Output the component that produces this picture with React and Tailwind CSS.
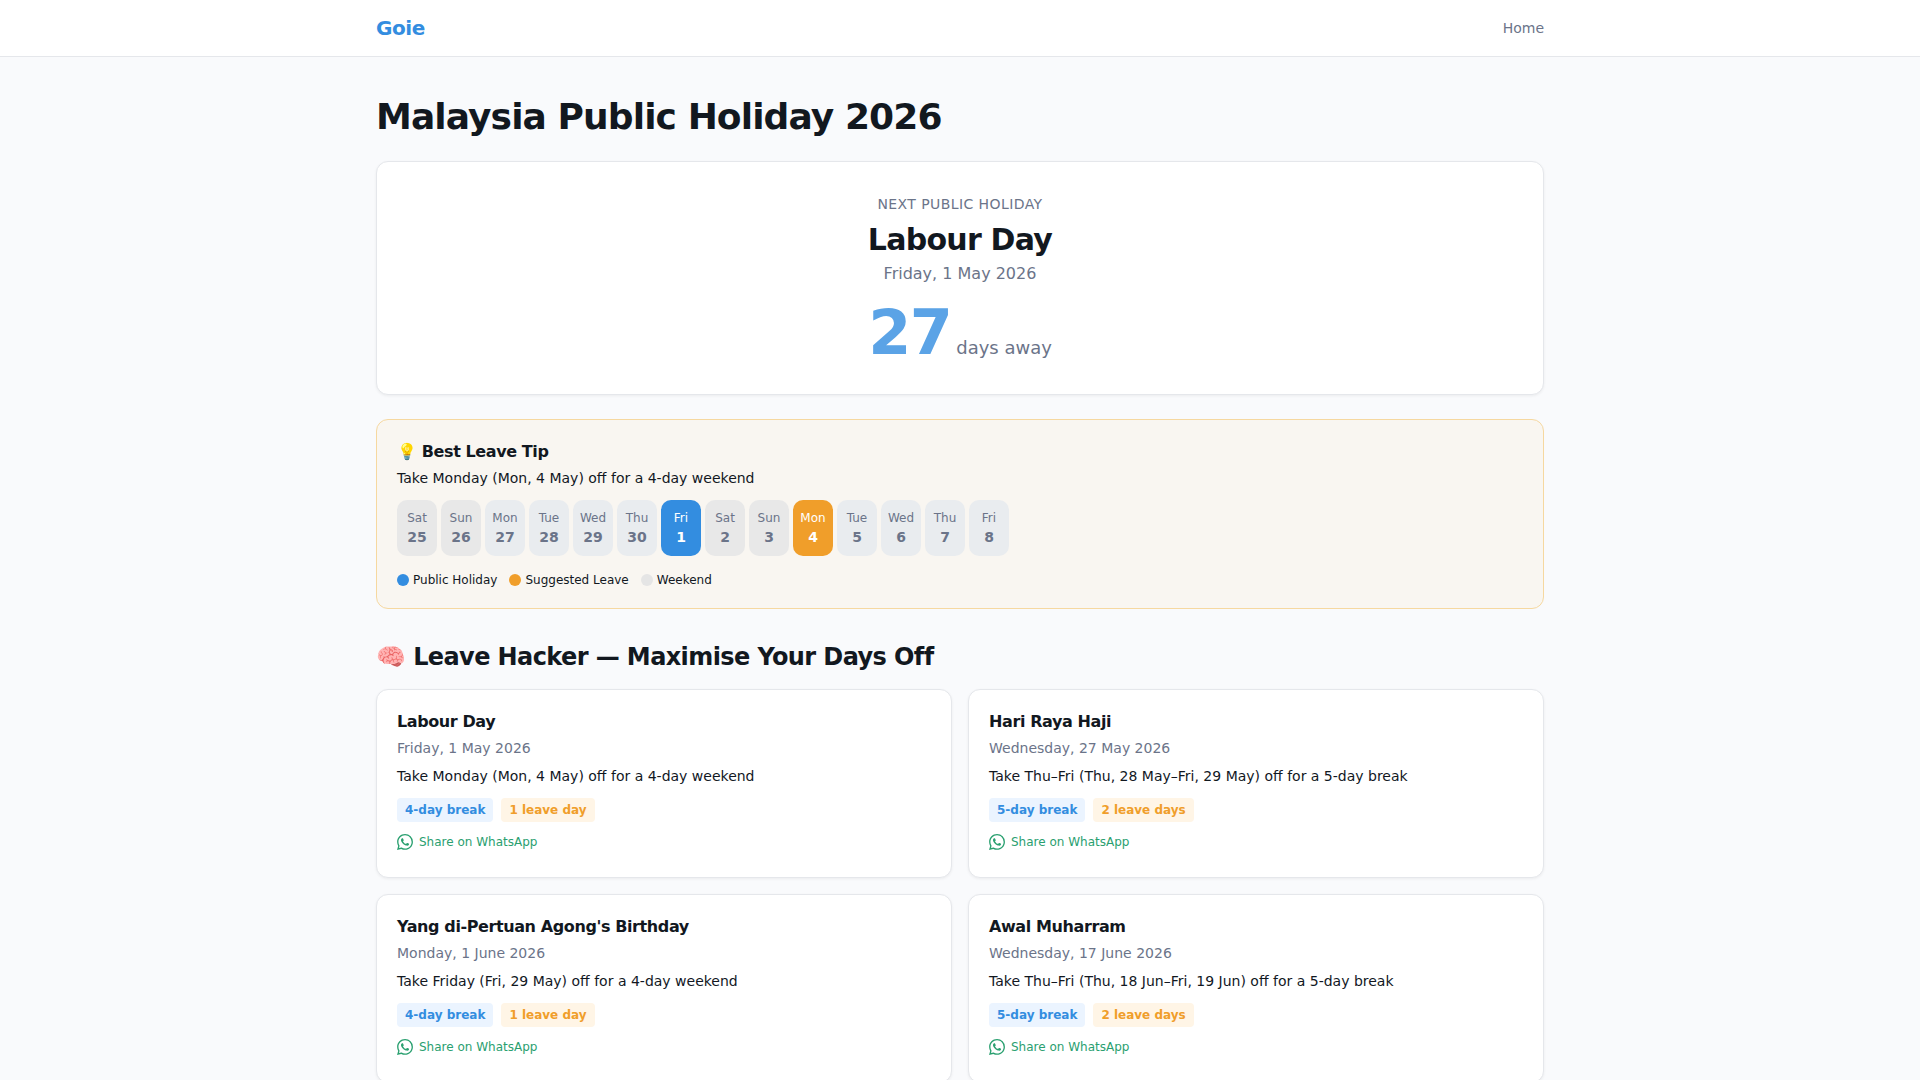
import React from "react";
import { SiWhatsapp } from "react-icons/si";

const days = [
  { name: "Sat", num: 25, type: "weekend" },
  { name: "Sun", num: 26, type: "weekend" },
  { name: "Mon", num: 27 },
  { name: "Tue", num: 28 },
  { name: "Wed", num: 29 },
  { name: "Thu", num: 30 },
  { name: "Fri", num: 1, type: "holiday" },
  { name: "Sat", num: 2, type: "weekend" },
  { name: "Sun", num: 3, type: "weekend" },
  { name: "Mon", num: 4, type: "leave" },
  { name: "Tue", num: 5 },
  { name: "Wed", num: 6 },
  { name: "Thu", num: 7 },
  { name: "Fri", num: 8 },
];

const tips = [
  { title: "Labour Day", date: "Friday, 1 May 2026", text: "Take Monday (Mon, 4 May) off for a 4-day weekend", brk: "4-day break", leave: "1 leave day" },
  { title: "Hari Raya Haji", date: "Wednesday, 27 May 2026", text: "Take Thu–Fri (Thu, 28 May–Fri, 29 May) off for a 5-day break", brk: "5-day break", leave: "2 leave days" },
  { title: "Yang di-Pertuan Agong's Birthday", date: "Monday, 1 June 2026", text: "Take Friday (Fri, 29 May) off for a 4-day weekend", brk: "4-day break", leave: "1 leave day" },
  { title: "Awal Muharram", date: "Wednesday, 17 June 2026", text: "Take Thu–Fri (Thu, 18 Jun–Fri, 19 Jun) off for a 5-day break", brk: "5-day break", leave: "2 leave days" },
];

const dayStyles = {
  weekend: "bg-[#e8e8e8] text-[#6b7489]",
  holiday: "bg-[#338de0] text-white",
  leave: "bg-[#f09e2a] text-white",
  normal: "bg-[#e9ecef] text-[#6b7489]",
};

const TipCard = ({ tip }) => (
  <div className="bg-white border border-[#e5e7eb] rounded-xl px-5 pt-5 pb-[23px] shadow-[0_1px_3px_rgba(0,0,0,0.06)]">
    <h3 className="text-base leading-6 font-bold tracking-[-0.4px] text-[#12181f]">{tip.title}</h3>
    <p className="mt-1 text-sm leading-[21px] text-[#6b7489]">{tip.date}</p>
    <p className="mt-[7px] text-sm leading-[21px] text-[#12181f]">{tip.text}</p>
    <div className="mt-[11px] flex gap-2">
      <span className="px-2 h-6 leading-6 rounded text-xs font-bold bg-[#ebf4ff] text-[#338de0]">{tip.brk}</span>
      <span className="px-2 h-6 leading-6 rounded text-xs font-bold bg-[#fff5e6] text-[#f09e2a]">{tip.leave}</span>
    </div>
    <a className="mt-2 flex items-center gap-[6px] h-6 text-xs text-[#2aa070]">
      <SiWhatsapp className="w-4 h-4" />
      Share on WhatsApp
    </a>
  </div>
);

const App = () => {
  return (
    <div className="min-h-screen bg-[#f9fafc] font-['DejaVu_Sans',sans-serif] text-[#12181f]">
      {/* Nav */}
      <nav className="bg-white border-b border-[#e5e7eb] h-[57px]">
        <div className="max-w-[1200px] mx-auto px-4 h-14 flex items-center justify-between">
          <span className="text-xl font-bold tracking-[-0.4px] text-[#338de0]">Goie</span>
          <span className="text-sm text-[#6b7489]">Home</span>
        </div>
      </nav>

      <main className="max-w-[1200px] mx-auto px-4 pt-[33px] pb-8">
        <h1 className="text-4xl leading-[54px] font-bold tracking-[-0.9px] mb-[17px]">Malaysia Public Holiday 2026</h1>

        {/* Next holiday */}
        <section className="bg-white border border-[#e5e7eb] rounded-xl h-[234px] pt-8 text-center shadow-[0_1px_3px_rgba(0,0,0,0.06)]">
          <p className="text-sm leading-[21px] text-[#6b7489] uppercase tracking-[0.42px]">Next Public Holiday</p>
          <h2 className="mt-[2px] text-[30px] leading-[45px] font-bold tracking-[-0.75px]">Labour Day</h2>
          <p className="text-base leading-6 text-[#6b7489]">Friday, 1 May 2026</p>
          <div className="mt-[11px] flex items-baseline justify-center gap-[5px]">
            <span className="text-[62px] leading-[72px] font-bold tracking-[-1.6px] text-[#338de0] opacity-80">27</span>
            <span className="text-lg text-[#6b7489]">days away</span>
          </div>
        </section>

        {/* Best leave tip */}
        <section className="mt-6 bg-[#f9f6f1] border border-[#f6d8a0] rounded-xl h-[190px] p-5">
          <h3 className="text-base leading-6 font-bold tracking-[-0.4px]">💡 Best Leave Tip</h3>
          <p className="mt-1 text-sm leading-[21px]">Take Monday (Mon, 4 May) off for a 4-day weekend</p>
          <div className="mt-[11px] flex gap-1">
            {days.map((d, i) => (
              <div key={i} className={`w-10 h-[56px] rounded-[10px] flex flex-col items-center justify-center ${dayStyles[d.type || "normal"]}`}>
                <span className="text-xs leading-[18px]">{d.name}</span>
                <span className="text-sm leading-[20px] pb-px font-bold">{d.num}</span>
              </div>
            ))}
          </div>
          <div className="mt-[15px] flex items-center gap-3 text-xs leading-[18px]">
            <span className="flex items-center gap-1"><i className="w-3 h-3 rounded-full bg-[#338de0]"></i>Public Holiday</span>
            <span className="flex items-center gap-1"><i className="w-3 h-3 rounded-full bg-[#f09e2a]"></i>Suggested Leave</span>
            <span className="flex items-center gap-1"><i className="w-3 h-3 rounded-full bg-[#e5e5e5]"></i>Weekend</span>
          </div>
        </section>

        {/* Leave hacker */}
        <h2 className="mt-[30px] mb-[14px] text-2xl leading-9 font-bold tracking-[-0.6px]">🧠 Leave Hacker — Maximise Your Days Off</h2>
        <div className="grid grid-cols-2 gap-4">
          {tips.map((t) => (
            <TipCard key={t.title} tip={t} />
          ))}
        </div>
      </main>
    </div>
  );
};

export default App;
